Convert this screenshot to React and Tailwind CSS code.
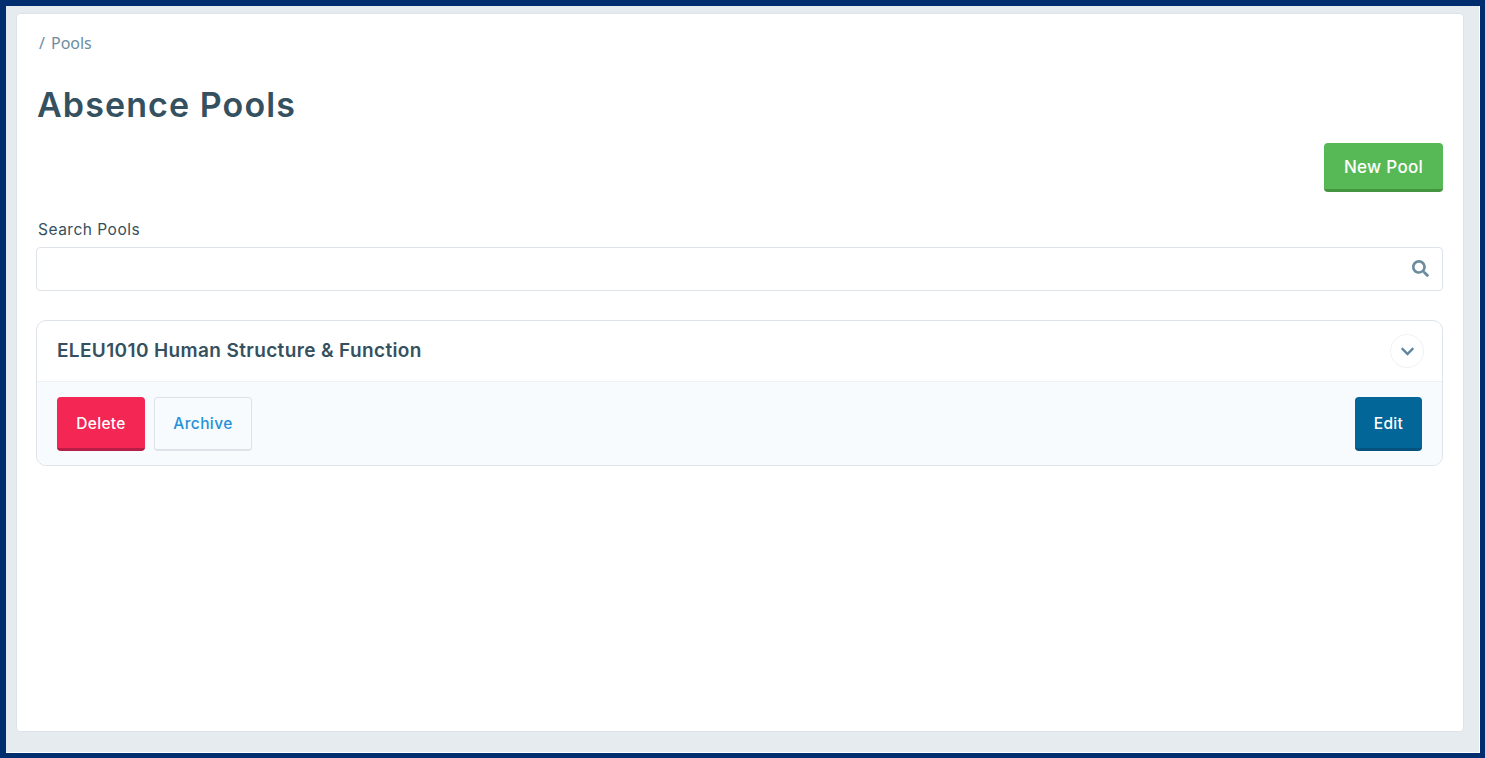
import React from "react";
import { FaSearch, FaChevronDown } from "react-icons/fa";

const sans = "font-['Inter','Liberation_Sans',sans-serif]";

export default function App() {
  return (
    <div className="h-[758px] w-[1485px] overflow-hidden bg-[#002d6e] pt-[6px] pl-[6px] pr-[5px] pb-[5px]">
      <div className={`flex h-full flex-col border-r border-b border-white bg-[#e6ebf0] pl-[10px] pr-[15px] pt-[7px] pb-[20px] ${sans}`}>
        <main className="flex flex-1 flex-col rounded-[4px] border border-[#dde3e8] bg-white pl-[19px] pr-[20px]">
          <nav className="flex gap-[6px] pl-[3px] pt-[17px] font-['Noto_Sans',sans-serif] text-[16px] leading-[24px] text-[#6b8d9f]"><span>/</span><span>Pools</span></nav>
          <h1 className="mt-[26px] pl-[1px] text-[34px] font-semibold leading-[48px] tracking-[1.1px] text-[#35505e]">Absence Pools</h1>
          <div className="mt-[14px] flex justify-end">
            <button className="h-[49px] w-[119px] rounded-[4px] border-b-[3px] border-[#45943f] bg-[#57b956] pt-[4px] text-[17px] font-medium tracking-[0.3px] text-white">New Pool</button>
          </div>
          <label className="mt-[26px] block pl-[2px] text-[15.5px] leading-[24px] tracking-[0.5px] text-[#35505e]">Search Pools</label>
          <div className="relative mt-[5px] h-[44px] rounded-[4px] border border-[#dde3e8] bg-white">
            <FaSearch className="absolute right-[13px] top-[12px] h-[17px] w-[17px] text-[#6b8d9f]" />
          </div>
          <section className="mt-[29px] overflow-hidden rounded-[10px] border border-[#dde3e8]">
            <div className="flex h-[61px] items-center justify-between border-b border-[#eef2f6] pl-[20px] pr-[18px]">
              <h2 className="text-[19px] font-semibold tracking-[0.37px] text-[#35505e]">ELEU1010 Human Structure &amp; Function</h2>
              <span className="flex h-[34px] w-[34px] items-center justify-center rounded-full border border-[#eef2f6] bg-white">
                <FaChevronDown className="h-[15px] w-[15px] text-[#5e87a3]" />
              </span>
            </div>
            <div className="flex h-[83px] items-start justify-between bg-[#f7fbfe] pl-[20px] pr-[20px] pt-[15px]">
              <div className="flex gap-[9px]">
                <button className="h-[54px] w-[88px] rounded-[4px] border-b-[3px] border-[#b81d45] bg-[#f42654] pt-[2px] text-[15.5px] font-medium tracking-[0.3px] text-white">Delete</button>
                <button className="h-[54px] w-[98px] rounded-[4px] border border-b-[2px] border-[#dde3e8] bg-[#f7fbfe] pt-[1px] text-[15.5px] font-medium tracking-[0.4px] text-[#2491d8]">Archive</button>
              </div>
              <button className="h-[54px] w-[67px] rounded-[4px] border-b-[3px] border-[#05527f] bg-[#026699] pt-[2px] text-[15.5px] font-medium tracking-[0.3px] text-white">Edit</button>
            </div>
          </section>
        </main>
      </div>
    </div>
  );
}
